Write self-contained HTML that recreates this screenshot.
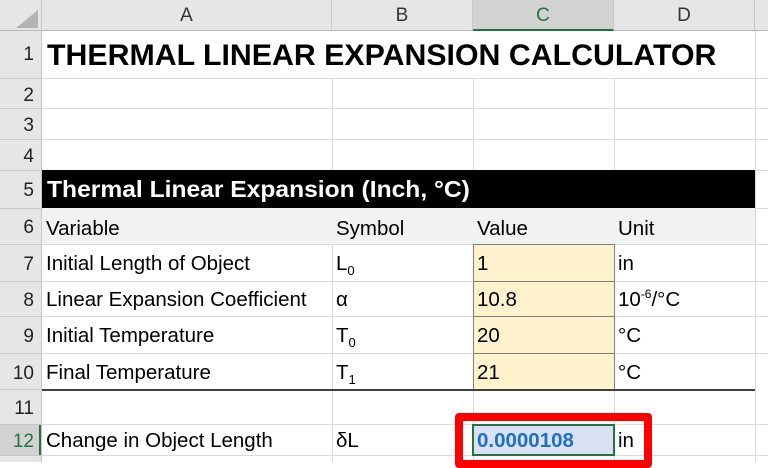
<!DOCTYPE html>
<html><head><style>
body{margin:0;width:768px;height:462px;overflow:hidden;background:#fff;font-family:"Liberation Sans",sans-serif;position:relative}
div{position:absolute;box-sizing:border-box}
.t{font-size:20.5px;color:#000;white-space:nowrap;line-height:1}
.vl{width:1px;background:#dadada}
.hl{height:1px;background:#dadada}
.rh{left:0;width:42px;text-align:right;padding-right:8px;font-size:19px;color:#222;background:#e6e6e6}
.ch{top:0;height:31px;font-size:19px;color:#333;text-align:center;line-height:31px;background:#e6e6e6;border-right:1px solid #c8c8c8;border-bottom:1px solid #b8b8b8}
sub{font-size:13px;vertical-align:-5px;line-height:0}
sup{font-size:12px;vertical-align:8px;line-height:0}
</style></head><body>
<div style="left:0;top:0;width:42px;height:31px;background:#e6e6e6;border-right:1px solid #c8c8c8;border-bottom:1px solid #b8b8b8"></div>
<div style="left:16px;top:10px;width:0;height:0;border-left:22px solid transparent;border-bottom:18px solid #b4b4b4"></div>
<div class="ch" style="left:42px;width:290px">A</div>
<div class="ch" style="left:332px;width:141px">B</div>
<div class="ch" style="left:473px;width:141px;background:#d2d2d2;color:#217346;border-bottom:2px solid #217346">C</div>
<div class="ch" style="left:614px;width:141px">D</div>
<div class="ch" style="left:755px;width:20px"></div>
<div style="left:0;top:31px;width:42px;height:431px;background:#e6e6e6;border-right:1px solid #c8c8c8"></div>
<div class="hl" style="left:42px;width:726px;top:78px"></div>
<div class="hl" style="left:42px;width:726px;top:108px"></div>
<div class="hl" style="left:42px;width:726px;top:139px"></div>
<div class="hl" style="left:42px;width:726px;top:170px"></div>
<div class="hl" style="left:42px;width:726px;top:208px"></div>
<div class="hl" style="left:42px;width:726px;top:244px"></div>
<div class="hl" style="left:42px;width:726px;top:281px"></div>
<div class="hl" style="left:42px;width:726px;top:316px"></div>
<div class="hl" style="left:42px;width:726px;top:353px"></div>
<div class="hl" style="left:42px;width:726px;top:424px"></div>
<div class="hl" style="left:42px;width:726px;top:455px"></div>
<div style="left:0;top:78px;width:42px;height:1px;background:#c8c8c8"></div>
<div style="left:0;top:108px;width:42px;height:1px;background:#c8c8c8"></div>
<div style="left:0;top:139px;width:42px;height:1px;background:#c8c8c8"></div>
<div style="left:0;top:170px;width:42px;height:1px;background:#c8c8c8"></div>
<div style="left:0;top:208px;width:42px;height:1px;background:#c8c8c8"></div>
<div style="left:0;top:244px;width:42px;height:1px;background:#c8c8c8"></div>
<div style="left:0;top:281px;width:42px;height:1px;background:#c8c8c8"></div>
<div style="left:0;top:316px;width:42px;height:1px;background:#c8c8c8"></div>
<div style="left:0;top:353px;width:42px;height:1px;background:#c8c8c8"></div>
<div style="left:0;top:389px;width:42px;height:1px;background:#c8c8c8"></div>
<div style="left:0;top:424px;width:42px;height:1px;background:#c8c8c8"></div>
<div style="left:0;top:455px;width:42px;height:1px;background:#c8c8c8"></div>
<div style="left:0;top:425px;width:41px;height:30px;background:#d2d2d2;border-right:2px solid #217346"></div>
<div class="vl" style="left:332px;top:78px;height:384px"></div>
<div class="vl" style="left:473px;top:78px;height:384px"></div>
<div class="vl" style="left:614px;top:78px;height:384px"></div>
<div class="vl" style="left:755px;top:31px;height:431px"></div>
<div style="left:42px;top:208px;width:713px;height:36px;background:#f2f2f2"></div>
<div style="left:42px;top:170px;width:713px;height:38px;background:#000"></div>
<div style="left:42px;top:31px;width:713px;height:47px;background:#fff"></div>
<div style="left:473px;top:244px;width:142px;height:146px;background:#fff2cc;border:1px solid #7f7f7f"></div>
<div style="left:473px;top:281px;width:142px;height:1px;background:#7f7f7f"></div>
<div style="left:473px;top:316px;width:142px;height:1px;background:#7f7f7f"></div>
<div style="left:473px;top:353px;width:142px;height:1px;background:#7f7f7f"></div>
<div style="left:42px;top:389px;width:713px;height:2px;background:#3f3f3f"></div>
<div class="rh t" style="top:45px;background:none;font-size:19px">1</div>
<div class="rh t" style="top:86px;background:none;font-size:19px">2</div>
<div class="rh t" style="top:116px;background:none;font-size:19px">3</div>
<div class="rh t" style="top:147px;background:none;font-size:19px">4</div>
<div class="rh t" style="top:181px;background:none;font-size:19px">5</div>
<div class="rh t" style="top:218px;background:none;font-size:19px">6</div>
<div class="rh t" style="top:255px;background:none;font-size:19px">7</div>
<div class="rh t" style="top:291px;background:none;font-size:19px">8</div>
<div class="rh t" style="top:327px;background:none;font-size:19px">9</div>
<div class="rh t" style="top:364px;background:none;font-size:19px">10</div>
<div class="rh t" style="top:399px;background:none;font-size:19px">11</div>
<div class="rh t" style="top:432px;background:none;color:#217346;font-size:19px">12</div>
<div class="t" style="left:47px;top:41px;font-size:30px;font-weight:bold;transform:scaleX(1.01);transform-origin:left">THERMAL LINEAR EXPANSION CALCULATOR</div>
<div class="t" style="left:47px;top:178px;font-size:23px;font-weight:bold;color:#fff;transform:scaleX(1.07);transform-origin:left">Thermal Linear Expansion (Inch, °C)</div>
<div class="t" style="left:46px;top:219px">Variable</div>
<div class="t" style="left:336px;top:219px">Symbol</div>
<div class="t" style="left:477px;top:219px">Value</div>
<div class="t" style="left:618px;top:219px">Unit</div>
<div class="t" style="left:46px;top:254px">Initial Length of Object</div>
<div class="t" style="left:336px;top:254px">L<sub>0</sub></div>
<div class="t" style="left:477px;top:254px">1</div>
<div class="t" style="left:618px;top:254px">in</div>
<div class="t" style="left:46px;top:290px">Linear Expansion Coefficient</div>
<div class="t" style="left:336px;top:290px">α</div>
<div class="t" style="left:477px;top:290px">10.8</div>
<div class="t" style="left:618px;top:290px">10<sup>-6</sup>/°C</div>
<div class="t" style="left:46px;top:326px">Initial Temperature</div>
<div class="t" style="left:336px;top:326px">T<sub>0</sub></div>
<div class="t" style="left:477px;top:326px">20</div>
<div class="t" style="left:618px;top:326px">°C</div>
<div class="t" style="left:46px;top:363px">Final Temperature</div>
<div class="t" style="left:336px;top:363px">T<sub>1</sub></div>
<div class="t" style="left:477px;top:363px">21</div>
<div class="t" style="left:618px;top:363px">°C</div>
<div class="t" style="left:46px;top:431px">Change in Object Length</div>
<div class="t" style="left:336px;top:431px">δL</div>
<div style="left:472px;top:424px;width:143px;height:32px;background:#d9e1f2;border:2px solid #217346"></div>
<div class="t" style="left:477px;top:431px;color:#1f70c1;font-weight:bold">0.0000108</div>
<div class="t" style="left:618px;top:431px">in</div>
<div style="left:455px;top:413px;width:197px;height:55px;border:8px solid #f00;border-radius:4px"></div>
</body></html>
